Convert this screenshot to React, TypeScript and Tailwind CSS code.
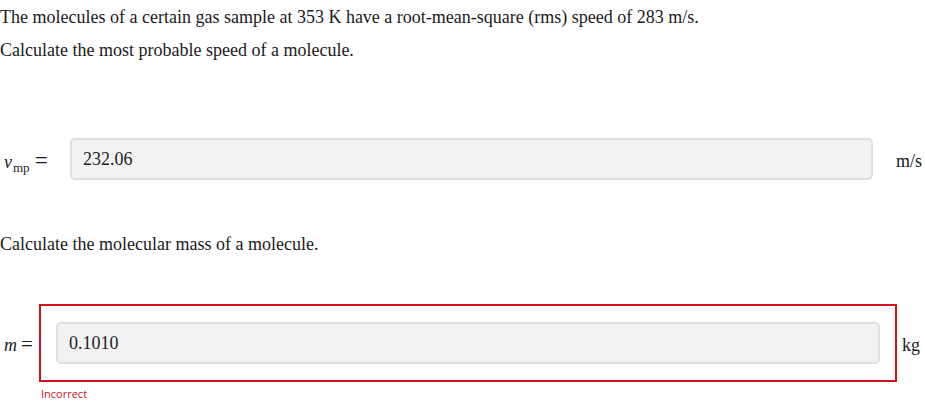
import React from 'react';

const serif = { fontFamily: '"Liberation Serif", "Times New Roman", serif' };

const AnswerInput: React.FC<{ value: string; className?: string }> = ({ value, className }) => (
  <div
    className={`h-[42px] flex items-center pl-[11px] bg-[#f2f2f2] border-2 border-[#dfdfdf] rounded-[5px] text-[18px] text-[#222] ${className ?? ''}`}
    style={serif}
  >
    {value}
  </div>
);

export default function App() {
  return (
    <div
      className="w-[925px] h-[401px] bg-white text-[#1a1a1a] text-[18px] overflow-hidden"
      style={serif}
    >
      <p className="mt-[5px] leading-[24px]">
        The molecules of a certain gas sample at 353 K have a root-mean-square (rms) speed of 283 m/s.
      </p>
      <p className="mt-[9px] leading-[24px]">Calculate the most probable speed of a molecule.</p>

      {/* most probable speed */}
      <div className="mt-[76px] flex items-center">
        <div className="w-[70px] pl-[4px] flex items-baseline pt-[6px]">
          <span className="italic text-[18px]">v</span>
          <span className="text-[13px] relative top-[4px] ml-[1px]">mp</span>
          <span className="ml-[5px] text-[23px] leading-none">=</span>
        </div>
        <AnswerInput value="232.06" className="w-[803px]" />
        <span className="pl-[23px] pt-[4px]">m/s</span>
      </div>

      <p className="mt-[52px] leading-[24px]">Calculate the molecular mass of a molecule.</p>

      {/* molecular mass */}
      <div className="mt-[48px] flex items-center">
        <div className="w-[39px] pl-[4px] flex items-baseline pt-[4px]">
          <span className="italic text-[18px]">m</span>
          <span className="ml-[4px] text-[21px] leading-none">=</span>
        </div>
        <div className="w-[858px] h-[78px] border-2 border-[#d0101b] px-[15px] pt-[16px]">
          <AnswerInput value="0.1010" className="w-full" />
        </div>
        <span className="pl-[5px] pt-[4px]">kg</span>
      </div>
      <div
        className="mt-[5px] pl-[41px] text-[11px] leading-[14px] text-[#d0101b]"
        style={{ fontFamily: '"Open Sans", "Noto Sans", sans-serif' }}
      >
        Incorrect
      </div>
    </div>
  );
}
